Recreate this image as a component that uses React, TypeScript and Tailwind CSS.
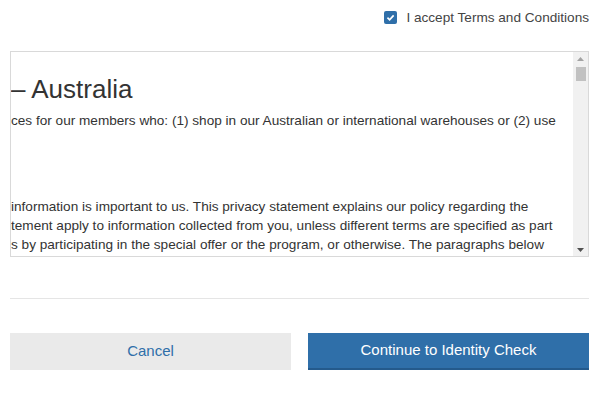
import React from "react";

export default function App() {
  return (
    <div
      className="w-[600px] h-[400px] bg-white overflow-hidden pl-[10px] pr-[11px] text-[#333333]"
      style={{ fontFamily: '"Liberation Sans", Arial, sans-serif' }}
    >
      <div className="flex justify-end items-center h-[35px]">
        <span className="w-[13px] h-[13px] rounded-[2px] bg-[#2f6fa9] flex items-center justify-center mr-[9px]">
          <svg width="9" height="9" viewBox="0 0 10 10">
            <path d="M1.6 5.2 L4 7.5 L8.5 2.6" fill="none" stroke="white" strokeWidth="1.9" />
          </svg>
        </span>
        <span className="text-[13.6px] leading-[20px] text-[#444444]">I accept Terms and Conditions</span>
      </div>

      <div className="mt-[16px] h-[206px] border border-[#d9d9d9] flex">
        <div className="flex-1 overflow-hidden pt-[22px] whitespace-nowrap">
          <div className="text-[26px] leading-[30px]">– Australia</div>
          <div className="mt-[8px] text-[13.6px] leading-[18px]">
            ces for our members who: (1) shop in our Australian or international warehouses or (2) use
          </div>
          <div className="mt-[67px] text-[13.6px] leading-[19px]">
            <div>information is important to us. This privacy statement explains our policy regarding the</div>
            <div>tement apply to information collected from you, unless different terms are specified as part</div>
            <div>s by participating in the special offer or the program, or otherwise. The paragraphs below</div>
          </div>
        </div>
        <div className="w-[15px] bg-[#f1f1f1] flex flex-col items-center">
          <div className="h-[13px] flex items-center justify-center">
            <svg width="7" height="4" viewBox="0 0 7 4">
              <path d="M0 4 L3.5 0 L7 4 Z" fill="#a3a3a3" />
            </svg>
          </div>
          <div className="mt-[2px] w-[10px] h-[14px] bg-[#c1c1c1]" />
          <div className="flex-1" />
          <div className="h-[13px] flex items-center justify-center">
            <svg width="7" height="4" viewBox="0 0 7 4">
              <path d="M0 0 L3.5 4 L7 0 Z" fill="#505050" />
            </svg>
          </div>
        </div>
      </div>

      <div className="mt-[41px] h-px bg-[#e5e5e5]" />

      <div className="mt-[34px] flex gap-[17px]">
        <button className="w-[281px] h-[37px] bg-[#eaeaea] text-[#2f6fa9] text-[15px]">Cancel</button>
        <button className="flex-1 h-[37px] bg-[#2f6fa9] border-b-2 border-[#245a8c] text-white text-[15px]">
          Continue to Identity Check
        </button>
      </div>
    </div>
  );
}
